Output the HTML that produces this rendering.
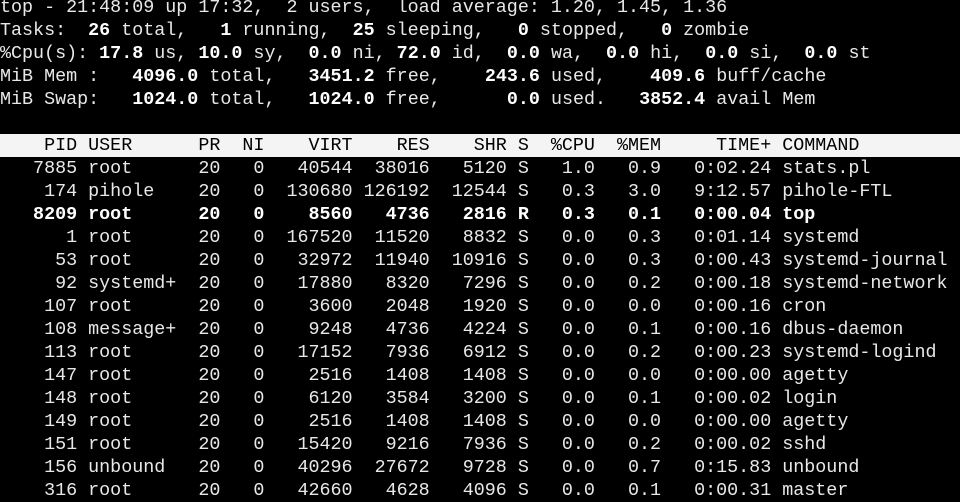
<!DOCTYPE html>
<html><head><meta charset="utf-8"><style>
html,body{margin:0;padding:0;background:#000;width:960px;height:502px;overflow:hidden}
pre{position:absolute;left:0;top:-4px;margin:0;font-family:"Liberation Mono",monospace;font-size:18.38px;line-height:23px;color:#e8e8e8;white-space:pre}
b{color:#fff;font-weight:bold}
.h{display:block;background:#f4f4f4;color:#000;width:960px}
</style></head><body>
<pre>top - 21:48:09 up 17:32,  2 users,  load average: 1.20, 1.45, 1.36
Tasks: <b> 26 </b>total,<b>   1 </b>running,<b>  25 </b>sleeping,<b>   0 </b>stopped,<b>   0 </b>zombie
%Cpu(s):<b> 17.8 </b>us,<b> 10.0 </b>sy,<b>  0.0 </b>ni,<b> 72.0 </b>id,<b>  0.0 </b>wa,<b>  0.0 </b>hi,<b>  0.0 </b>si,<b>  0.0 </b>st
MiB Mem : <b>  4096.0 </b>total,<b>   3451.2 </b>free,<b>    243.6 </b>used,<b>    409.6 </b>buff/cache
MiB Swap: <b>  1024.0 </b>total,<b>   1024.0 </b>free,<b>      0.0 </b>used.<b>   3852.4 </b>avail Mem

<span class="h">    PID USER      PR  NI    VIRT    RES    SHR S  %CPU  %MEM     TIME+ COMMAND</span>   7885 root      20   0   40544  38016   5120 S   1.0   0.9   0:02.24 stats.pl
    174 pihole    20   0  130680 126192  12544 S   0.3   3.0   9:12.57 pihole-FTL
<b>   8209 root      20   0    8560   4736   2816 R   0.3   0.1   0:00.04 top</b>
      1 root      20   0  167520  11520   8832 S   0.0   0.3   0:01.14 systemd
     53 root      20   0   32972  11940  10916 S   0.0   0.3   0:00.43 systemd-journal
     92 systemd+  20   0   17880   8320   7296 S   0.0   0.2   0:00.18 systemd-network
    107 root      20   0    3600   2048   1920 S   0.0   0.0   0:00.16 cron
    108 message+  20   0    9248   4736   4224 S   0.0   0.1   0:00.16 dbus-daemon
    113 root      20   0   17152   7936   6912 S   0.0   0.2   0:00.23 systemd-logind
    147 root      20   0    2516   1408   1408 S   0.0   0.0   0:00.00 agetty
    148 root      20   0    6120   3584   3200 S   0.0   0.1   0:00.02 login
    149 root      20   0    2516   1408   1408 S   0.0   0.0   0:00.00 agetty
    151 root      20   0   15420   9216   7936 S   0.0   0.2   0:00.02 sshd
    156 unbound   20   0   40296  27672   9728 S   0.0   0.7   0:15.83 unbound
    316 root      20   0   42660   4628   4096 S   0.0   0.1   0:00.31 master</pre>
</body></html>
